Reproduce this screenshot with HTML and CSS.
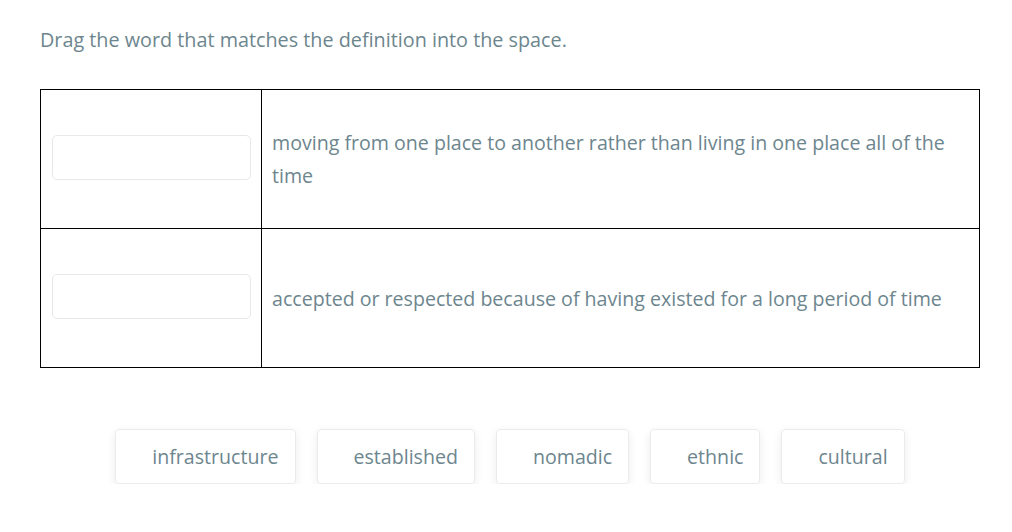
FILE: index.html
```html
<!DOCTYPE html>
<html lang="en">
<head>
    <meta charset="UTF-8">
    <meta name="viewport" content="width=device-width, initial-scale=1.0">
    <title>Drag the word</title>
    <link rel="stylesheet" href="styles.css">
</head>
<body>
    <div id="container">
        <p class="instruction">Drag the word that matches the definition into the space.</p>
        <table class="match">
            <tr>
                <td class="slot"><div class="drop"></div></td>
                <td class="def">moving from one place to another rather than living in one place all of the time</td>
            </tr>
            <tr>
                <td class="slot"><div class="drop"></div></td>
                <td class="def">accepted or respected because of having existed for a long period of time</td>
            </tr>
        </table>
        <div class="words">
            <div class="word">infrastructure</div>
            <div class="word">established</div>
            <div class="word">nomadic</div>
            <div class="word">ethnic</div>
            <div class="word">cultural</div>
        </div>
    </div>
</body>
</html>
```

FILE: styles.css
```css
body {margin: 0; background: #fff; font-family: "Open Sans", "Noto Sans", sans-serif; color: #6d868e;}
#container {width: 940px; padding: 26px 32px 0 40px;}
.instruction {margin: 0; font-size: 19.8px; line-height: 28px;}
.match {margin-top: 35px; width: 940px; border-collapse: collapse;}
.match td {border: 1px solid #000; height: 138px; padding: 0;}
.slot {width: 220px;}
.drop {margin: 0 10px 0 11px; height: 43px; border: 1px solid #e8e8e8; border-radius: 5px; position: relative; top: -2px;}
.def {padding: 0 20px 0 10px !important; font-size: 19.6px; line-height: 33px;}
.words {display: flex; justify-content: center; gap: 21px; margin-top: 61px;}
.word {height: 53px; line-height: 53px; padding: 0 16px 0 36px; border: 1px solid #ebebeb; border-radius: 4px; box-shadow: 0 3px 10px rgba(0,0,0,0.08); font-size: 19.6px;}
```
